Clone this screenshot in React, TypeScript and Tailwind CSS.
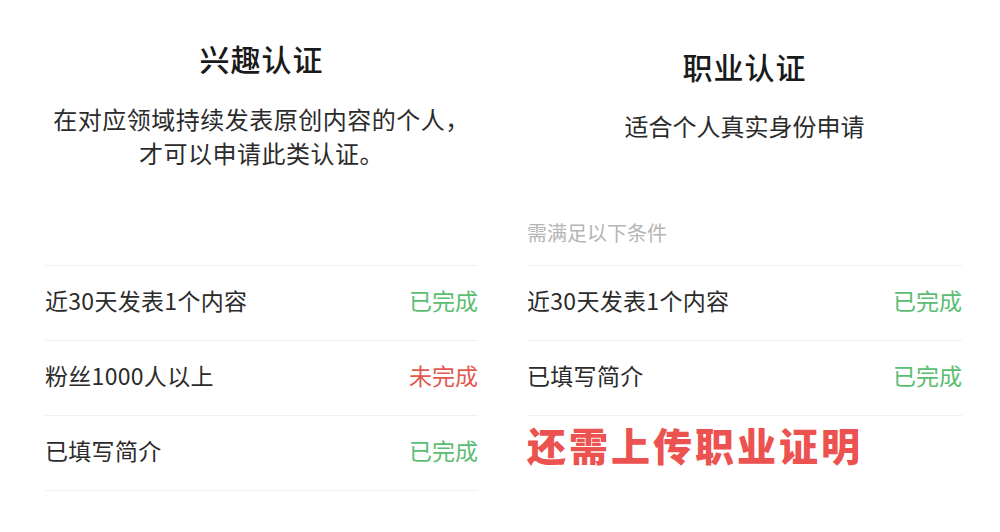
import React from 'react';

type Status = 'done' | 'todo';

type Requirement = { label: string; status: Status };

const interestReqs: Requirement[] = [
  { label: '近30天发表1个内容', status: 'done' },
  { label: '粉丝1000人以上', status: 'todo' },
  { label: '已填写简介', status: 'done' },
];

const careerReqs: Requirement[] = [
  { label: '近30天发表1个内容', status: 'done' },
  { label: '已填写简介', status: 'done' },
];

const font = { fontFamily: '"Noto Sans CJK SC", "Noto Sans", sans-serif' };

function RequirementList({ items }: { items: Requirement[] }) {
  return (
    <div className="border-t border-[#f0f0f0]">
      {items.map((item) => (
        <div
          key={item.label}
          className="h-[75px] pb-[5px] flex flex-row justify-between items-center border-b border-[#f0f0f0] text-[23px]"
        >
          <span className="text-[#2b2b2b] tracking-[0.3px]">{item.label}</span>
          {item.status === 'done' ? (
            <span className="text-[#5bbd72]">已完成</span>
          ) : (
            <span className="text-[#e2594f]">未完成</span>
          )}
        </div>
      ))}
    </div>
  );
}

export default function App() {
  return (
    <div className="w-[1000px] h-[532px] bg-white flex flex-row overflow-hidden" style={font}>
      {/* interest certification */}
      <div className="ml-[45px] w-[433px] flex flex-col">
        <h2 className="pt-[40px] text-center text-[30px] leading-[36px] font-medium tracking-[1px] text-[#1a1a1a]">
          兴趣认证
        </h2>
        <p className="mt-[26px] text-center text-[24px] leading-[34px] tracking-[0.5px] text-[#2b2b2b]">
          在对应领域持续发表原创内容的个人，
          <br />
          才可以申请此类认证。
        </p>
        <div className="mt-[95px]">
          <RequirementList items={interestReqs} />
        </div>
      </div>

      {/* career certification */}
      <div className="ml-[49px] w-[435px] flex flex-col">
        <h2 className="pt-[48px] text-center text-[30px] leading-[36px] font-medium tracking-[1px] text-[#1a1a1a]">
          职业认证
        </h2>
        <p className="mt-[25px] text-center text-[24px] leading-[34px] text-[#2b2b2b]">
          适合个人真实身份申请
        </p>
        <p className="mt-[76px] text-[20px] leading-[28px] text-[#b5b5b5]">需满足以下条件</p>
        <div className="mt-[18px]">
          <RequirementList items={careerReqs} />
        </div>
        <p className="mt-[6px] text-[39px] leading-[44px] font-extrabold tracking-[3px] text-[#ec5250]">
          还需上传职业证明
        </p>
      </div>
    </div>
  );
}
